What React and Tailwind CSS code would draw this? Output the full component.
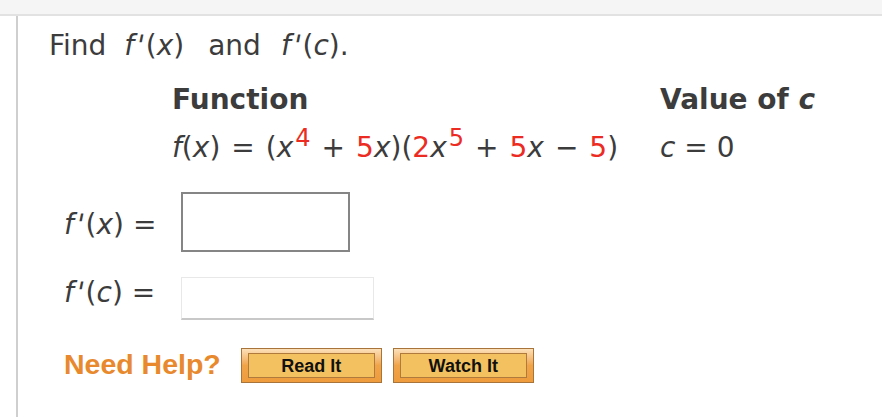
const red = "text-[#ec2b22]";

function Sup({ children }) {
  return (
    <span className={`relative -top-[11px] ml-[2px] text-[24px] leading-none ${red}`}>{children}</span>
  );
}

function I({ children }) {
  return <span className="italic">{children}</span>;
}

function Op({ children }) {
  return <span className="mx-[11px]">{children}</span>;
}

function R({ children }) {
  return <span className={red}>{children}</span>;
}

// f' written the way the page does it: italic f, a slanted tick
function FPrime() {
  return (
    <>
      <I>f</I>
      <span className="ml-[2px] mr-[2px] inline-block -skew-x-12">'</span>
    </>
  );
}

function HelpButton({ label }) {
  return (
    <button className="h-[35px] w-[141px] border border-[#a8743a] bg-gradient-to-b from-[#fbe0b8] via-[#f0a448] to-[#ee9c3c] px-[6px] pt-[4px] pb-[4px]">
      <div className="flex h-full items-center justify-center border border-[#b07a3c] bg-[#f3c160] font-['Liberation_Sans',Arial,sans-serif] text-[18px] font-bold text-[#111]">
        {label}
      </div>
    </button>
  );
}

export default function App() {
  return (
    <div className="h-[417px] w-[882px] overflow-hidden bg-white font-['DejaVu_Sans',Verdana,sans-serif] text-[28px] leading-[32px] text-[#3c3c3c]">
      <div className="h-[16px] border-b-2 border-[#e2e2e2] bg-[#f5f5f5]" />
      <div className="ml-[16px] h-[401px] border-l-2 border-[#cfcfcf] pl-[31px] pt-[14px]">
        <p>
          Find&nbsp; <FPrime />(<I>x</I>)<span className="ml-[24px] mr-[20px]">and</span>
          <FPrime />(<I>c</I>).
        </p>

        <div className="ml-[123px] mt-[22px] flex">
          <div className="w-[488px]">
            <div className="font-bold">Function</div>
            <div className="mt-[16px] whitespace-nowrap">
              <I>f</I>(<I>x</I>)<Op>=</Op>(<I>x</I>
              <Sup>4</Sup>
              <Op>+</Op>
              <R>5</R>
              <I>x</I>)(<R>2</R>
              <I>x</I>
              <Sup>5</Sup>
              <Op>+</Op>
              <R>5</R>
              <I>x</I>
              <Op>&minus;</Op>
              <R>5</R>)
            </div>
          </div>
          <div>
            <div className="font-bold">
              Value of <I>c</I>
            </div>
            <div className="mt-[16px]">
              <I>c</I> = 0
            </div>
          </div>
        </div>

        <div className="ml-[15px] mt-[28px] flex items-start">
          <div className="mt-[17px] w-[117px] whitespace-nowrap">
            <FPrime />(<I>x</I>) =
          </div>
          <div className="h-[60px] w-[169px] border-2 border-[#858585] bg-white" />
        </div>

        <div className="ml-[15px] mt-[25px] flex items-start">
          <div className="w-[117px] whitespace-nowrap">
            <FPrime />(<I>c</I>) =
          </div>
          <div className="h-[43px] w-[193px] border border-b-2 border-[#e8e8e8] border-b-[#c8c8c8] bg-white" />
        </div>

        <div className="ml-[15px] mt-[28px] flex items-start">
          <span className="mr-[20px] font-['Liberation_Sans',Arial,sans-serif] text-[28.5px] font-bold text-[#e8892d]">
            Need Help?
          </span>
          <div className="flex gap-[11px]">
            <HelpButton label="Read It" />
            <HelpButton label="Watch It" />
          </div>
        </div>
      </div>
    </div>
  );
}
